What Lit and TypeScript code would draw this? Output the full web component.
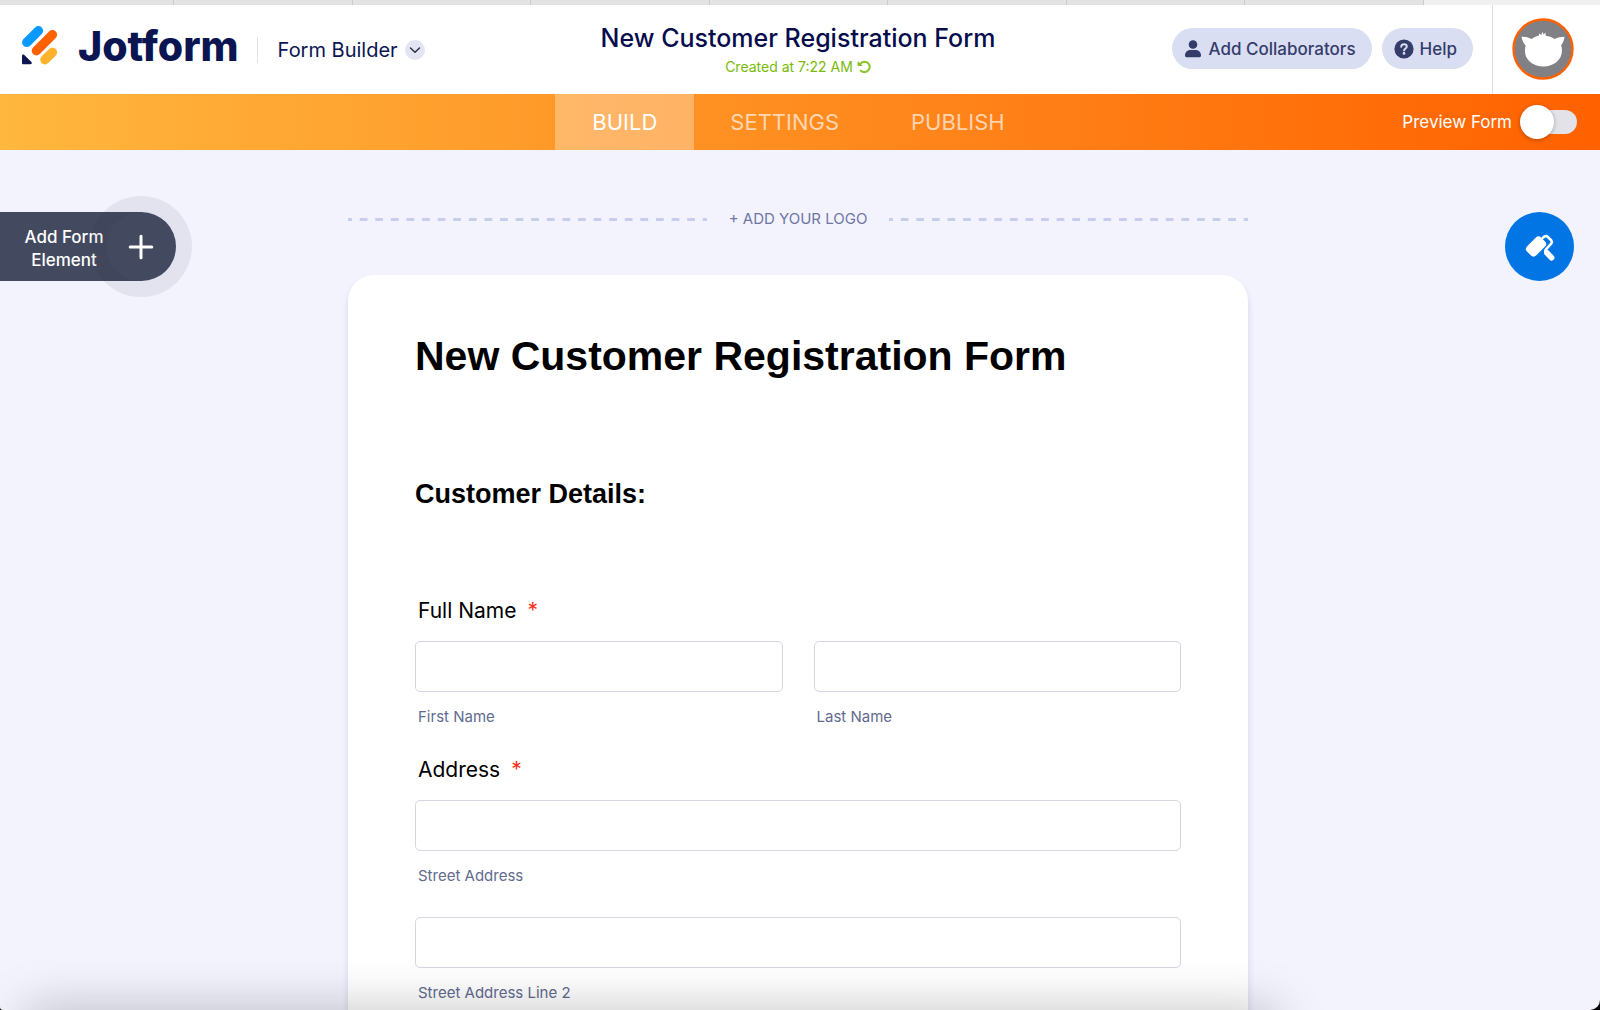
import { LitElement, html, css, svg } from "lit";
import { customElement, property, state } from "lit/decorators.js";
import { classMap } from "lit/directives/class-map.js";

const brandMark = html`<svg class="mark" viewBox="0 0 36 39" aria-hidden="true">
  <g fill="none" stroke-linecap="round" stroke-width="9.4">
    <path stroke="#0a99ff" d="M4.8 16.4 16.4 4.8" />
    <path stroke="#ff6100" d="M14.4 24.8 30.4 8.8" />
    <path stroke="#ffb32c" d="M22.9 33.7 30.4 26.4" />
  </g>
  <path fill="#0a1551" d="M0 30c0-1.300 1.400-1.900 2.300-1l7.100 7c.9.900.300 2.300-1 2.300H1.400C.6 38.300 0 37.700 0 37z" />
</svg>`;

const chevronIcon = svg`<svg class="chevron" viewBox="0 0 20 20" aria-hidden="true">
  <circle cx="10" cy="10" r="10" fill="#e3e5f5" />
  <path d="M5.500 8 10 12.200 14.500 8" fill="none" stroke="#2c3345" stroke-width="1.500" stroke-linecap="round" stroke-linejoin="round" />
</svg>`;

const undoIcon = svg`<svg class="undo" viewBox="0 0 14 14" aria-hidden="true">
  <path d="M3 4.200C4.200 2.400 6 1.700 7.700 1.700a5.200 5.200 0 1 1-3.800 9" fill="none" stroke="#78bb07" stroke-opacity=".85" stroke-width="2.100" stroke-linecap="round" />
  <path d="M.6.9v5h5z" fill="#78bb07" fill-opacity=".9" />
</svg>`;

const personIcon = svg`<svg class="person" viewBox="0 0 16 18" aria-hidden="true">
  <circle cx="8" cy="4.500" r="4.300" fill="#343c6a" />
  <path d="M0 15.600C0 12.300 2.200 10 5.200 10h5.600c3 0 5.200 2.300 5.200 5.600 0 .9-.6 1.600-1.600 1.600H1.600C.6 17.200 0 16.500 0 15.600z" fill="#343c6a" />
</svg>`;

const helpIcon = svg`<svg class="help" viewBox="0 0 20 20" aria-hidden="true">
  <circle cx="10" cy="10" r="9.600" fill="#343c6a" />
  <path d="M7.200 7.800C7.300 6.100 8.500 5.200 10.100 5.200c1.600 0 2.700 1 2.700 2.300 0 1.900-2.700 2-2.700 4" fill="none" stroke="#dadef3" stroke-width="1.900" stroke-linecap="round" />
  <circle cx="10" cy="14.400" r="1.300" fill="#dadef3" />
</svg>`;

const avatarIcon = svg`<svg class="avatar" viewBox="0 0 62 62" aria-hidden="true">
  <circle cx="31" cy="31" r="29.500" fill="#808085" stroke="#ff6100" stroke-width="2.400" />
  <path fill="#fff" d="M9.500 18.700c3.700 0 7.200.9 10.300 2.300 2.300-1.900 4.600-2.900 7.300-3.400l-.1-2.200 2.400 1.500 1-3.200 1.200 2.700 1.900-1.900.2 3.200c3.400.3 6.100 1.400 8.800 3.300 3.200-1.500 6.400-2.300 10.100-2.300-.5 3.300-1.700 6.300-3.500 8.600.6 1.600.9 3.400.9 5.200 0 9.200-7.900 16-18.600 16s-18.500-6.800-18.500-16c0-1.700.3-3.300.8-4.900-2.200-2.600-3.700-5.600-4.200-8.900z" />
</svg>`;

const plusIcon = svg`<svg class="plus" viewBox="0 0 26 26" aria-hidden="true">
  <path d="M13 2.200v21.600M2.200 13h21.600" fill="none" stroke="#fff" stroke-width="3" stroke-linecap="round" />
</svg>`;

const rollerIcon = svg`<svg class="roller" viewBox="0 0 32 32" aria-hidden="true">
  <rect x="2" y="9" width="20" height="13" rx="4" fill="#fff" transform="rotate(-45 12 15.500)" />
  <path d="M18.800 6.800 20.600 5.400Q22.200 4.600 23.600 5.700L27.200 9.200Q28.400 10.800 27.400 12.400L22 18.300Q20.600 20 22 21.800" fill="none" stroke="#fff" stroke-width="2.600" stroke-linecap="round" stroke-linejoin="round" />
  <path d="M22.800 21.800 27.600 26.800" stroke="#fff" stroke-width="5.600" stroke-linecap="round" fill="none" />
</svg>`;

const TABS = ["BUILD", "SETTINGS", "PUBLISH"];

@customElement("builder-header")
class BuilderHeader extends LitElement {
  @property() formTitle = "";

  static styles = css`
    :host {
      display: grid;
      grid-template-columns: 1fr auto 1fr;
      align-items: center;
      height: 89px;
      background: #fff;
      color: #0a1551;
    }
    button { font: inherit; color: inherit; border: 0; background: none; padding: 0; cursor: pointer; }
    .left { display: flex; align-items: center; padding-left: 22px; }
    .brand {
      display: flex;
      align-items: center;
      gap: 20px;
      padding-bottom: 8px;
      color: #0a1551;
      font-size: 41px;
      line-height: 48px;
      font-weight: 800;
      text-decoration: none;
    }
    .mark { width: 36px; height: 39px; }
    .product {
      display: flex;
      align-items: center;
      gap: 7px;
      margin-left: 20px;
      font-size: 20px;
      line-height: 26px;
    }
    .rule { width: 1px; height: 26px; margin-left: 18px; background: #dfe1f2; }
    .chevron { width: 20px; height: 20px; }
    .middle { display: flex; flex-direction: column; align-items: center; gap: 3px; padding: 0 4px 1px 0; }
    h1 { margin: 0; font-size: 25px; line-height: 32px; font-weight: 500; color: #060c4c; }
    .saved { display: flex; align-items: center; gap: 4px; font-size: 14px; line-height: 20px; color: #78bb07; }
    .undo { display: block; width: 14px; height: 14px; }
    .right { display: flex; align-items: center; justify-content: flex-end; align-self: stretch; gap: 10px; }
    .pill {
      display: flex;
      align-items: center;
      height: 41px;
      margin-bottom: 2px;
      padding: 0 16px 0 13px;
      gap: 8px;
      border-radius: 21px;
      background: #dadef3;
      color: #343c6a;
      font-size: 17px;
      font-weight: 500;
    }
    .pill.ask { padding: 0 16px 0 12px; gap: 6px; }
    .person { width: 16px; height: 18px; }
    .help { width: 20px; height: 20px; }
    .account {
      display: flex;
      align-items: center;
      align-self: stretch;
      margin-left: 9px;
      padding: 0 26px 2px 19px;
      border-left: 1px solid #dfdfe3;
    }
    .avatar { display: block; width: 62px; height: 62px; }
  `;

  render() {
    return html`
      <div class="left">
        <a class="brand" href="#home">${brandMark}<span>Jotform</span></a>
        <span class="rule"></span>
        <button class="product"><span>Form Builder</span>${chevronIcon}</button>
      </div>
      <div class="middle">
        <h1>${this.formTitle}</h1>
        <div class="saved"><span>Created at 7:22 AM</span><button aria-label="Undo">${undoIcon}</button></div>
      </div>
      <div class="right">
        <button class="pill">${personIcon}<span>Add Collaborators</span></button>
        <button class="pill ask">${helpIcon}<span>Help</span></button>
        <div class="account"><button aria-label="Account">${avatarIcon}</button></div>
      </div>
    `;
  }
}

@customElement("builder-nav")
class BuilderNav extends LitElement {
  @state() private active = "BUILD";
  @state() private preview = false;

  static styles = css`
    :host {
      display: grid;
      grid-template-columns: 1fr auto 1fr;
      height: 56px;
      background: linear-gradient(to right, #ffb73e, #ff6100);
      color: #fff;
    }
    nav { grid-column: 2; display: flex; margin-right: 4px; }
    button {
      padding: 0 36px;
      border: 0;
      background: none;
      color: #ffffffa8;
      font: inherit;
      font-size: 22px;
      cursor: pointer;
    }
    button.active { padding: 0 37px; background: #ffffff4d; color: #fff; }
    label {
      display: flex;
      align-items: center;
      justify-content: flex-end;
      gap: 8px;
      padding-right: 23px;
      font-size: 17px;
    }
    input {
      appearance: none;
      position: relative;
      width: 57px;
      height: 34px;
      margin: 0;
      cursor: pointer;
    }
    input::before {
      content: "";
      position: absolute;
      inset: 5px 0 5px 6px;
      border-radius: 12px;
      background: #e2e2e8;
    }
    input::after {
      content: "";
      position: absolute;
      top: 0;
      left: 0;
      width: 34px;
      height: 34px;
      border-radius: 50%;
      background: #fff;
      box-shadow: 0 1px 4px #0000004d;
    }
    input:checked::after { left: auto; right: 0; }
  `;

  render() {
    return html`
      <nav>
        ${TABS.map(
          (t) => html`<button class=${classMap({ active: t === this.active })} @click=${() => (this.active = t)}>${t}</button>`
        )}
      </nav>
      <label for="preview"
        >Preview Form
        <input id="preview" type="checkbox" .checked=${this.preview} @change=${() => (this.preview = !this.preview)}
      /></label>
    `;
  }
}

@customElement("form-card")
class FormCard extends LitElement {
  @property() formTitle = "";

  static styles = css`
    :host {
      display: block;
      box-sizing: border-box;
      flex: 1;
      padding: 57px 67px 7px;
      border-radius: 26px 26px 0 0;
      background: #fff;
      box-shadow: 0 5px 6px #5459a733;
      color: #000;
    }
    h2, h3 { margin: 0; font-family: "Liberation Sans", Arial, sans-serif; font-weight: 700; }
    h2 { font-size: 41px; line-height: 48px; }
    h3 { margin-top: 98px; font-size: 27px; line-height: 32px; }
    form { display: flex; flex-direction: column; gap: 31px; margin-top: 89px; }
    fieldset { min-width: 0; margin: 0; padding: 0; border: 0; }
    legend { display: flex; gap: 11px; padding: 0 0 18px 3px; font-size: 21px; line-height: 24px; }
    .star { color: #ff2d1a; }
    .row { display: grid; grid-template-columns: 1fr 1fr; gap: 31px; }
    .stack { display: grid; gap: 31px; }
    .field { display: flex; flex-direction: column; gap: 15px; min-width: 0; }
    input {
      box-sizing: border-box;
      width: 100%;
      height: 51px;
      padding: 0 12px;
      border: 1px solid #d4d7e3;
      border-radius: 5px;
      background: transparent;
      font: inherit;
      font-size: 17px;
    }
    label { padding-left: 3px; color: #626a90; font-size: 15px; line-height: 20px; }
  `;

  private field(id: string, text: string) {
    return html`<div class="field"><input id=${id} type="text" /><label for=${id}>${text}</label></div>`;
  }

  render() {
    return html`
      <h2>${this.formTitle}</h2>
      <h3>Customer Details:</h3>
      <form>
        <fieldset>
          <legend>Full Name <span class="star">*</span></legend>
          <div class="row">${this.field("first", "First Name")}${this.field("last", "Last Name")}</div>
        </fieldset>
        <fieldset>
          <legend>Address <span class="star">*</span></legend>
          <div class="stack">${this.field("street", "Street Address")}${this.field("street2", "Street Address Line 2")}</div>
        </fieldset>
      </form>
    `;
  }
}

@customElement("app-root")
class AppRoot extends LitElement {
  static styles = css`
    :host {
      display: block;
      background: #000;
      font-family: Inter, "Liberation Sans", sans-serif;
    }
    .window {
      position: relative;
      display: flex;
      flex-direction: column;
      min-height: 100vh;
      overflow: hidden;
      border-radius: 0 0 10px 3px;
      background: #f3f3fe;
    }
    .strip {
      display: grid;
      grid-template-columns: 174px repeat(7, 1fr) 176px;
      height: 5px;
      background: #e3e3e3;
    }
    .strip span { border-right: 1px solid #cbcbcb; }
    .strip span:last-child { border: 0; background: #f0f0f0; }
    .stage {
      flex: 1;
      display: grid;
      grid-template-columns: 1fr minmax(0, 900px) 1fr;
      padding-right: 4px;
    }
    button { border: 0; padding: 0; font: inherit; cursor: pointer; }
    .add {
      display: flex;
      align-items: center;
      justify-self: start;
      align-self: start;
      height: 69px;
      margin-top: 62px;
      padding-left: 22px;
      border-radius: 0 35px 35px 0;
      background: #434a60;
      color: #fff;
      font-size: 17px;
      line-height: 23px;
      font-weight: 500;
    }
    .add span { width: 84px; padding-top: 4px; }
    .halo {
      display: grid;
      place-items: center;
      width: 70px;
      height: 69px;
      border-radius: 50%;
      box-shadow: 0 0 0 16px #1c1c2812;
    }
    .plus { width: 26px; height: 26px; }
    .center { display: flex; flex-direction: column; }
    .logo {
      display: flex;
      align-items: center;
      gap: 22px;
      margin: 58px 0 45px;
      background: none;
      color: #6f76a7;
      font-size: 15px;
      line-height: 22px;
    }
    .dash {
      flex: 1;
      height: 3px;
      background: linear-gradient(to right, #c8cdec 26%, #0000 26%, #0000 74%, #c8cdec 74%) 0 0 / calc(100% / 23) 100%;
    }
    .design {
      display: grid;
      place-items: center;
      justify-self: end;
      align-self: start;
      width: 69px;
      height: 69px;
      margin: 62px 22px 0 0;
      border-radius: 50%;
      background: #0075e3;
    }
    .roller { width: 32px; height: 32px; }
    .shade {
      position: absolute;
      bottom: -40px;
      left: 26px;
      right: 325px;
      height: 40px;
      box-shadow: 0 0 50px #00000042;
      pointer-events: none;
    }
  `;

  private formTitle = "New Customer Registration Form";

  render() {
    return html`
      <div class="window">
        <div class="strip">${Array.from({ length: 9 }, () => html`<span></span>`)}</div>
        <builder-header .formTitle=${this.formTitle}></builder-header>
        <builder-nav></builder-nav>
        <main class="stage">
          <button class="add"><span>Add Form Element</span><i class="halo">${plusIcon}</i></button>
          <div class="center">
            <button class="logo"><i class="dash"></i>+ ADD YOUR LOGO<i class="dash"></i></button>
            <form-card .formTitle=${this.formTitle}></form-card>
          </div>
          <button class="design" aria-label="Form Designer">${rollerIcon}</button>
        </main>
        <div class="shade"></div>
      </div>
    `;
  }
}
